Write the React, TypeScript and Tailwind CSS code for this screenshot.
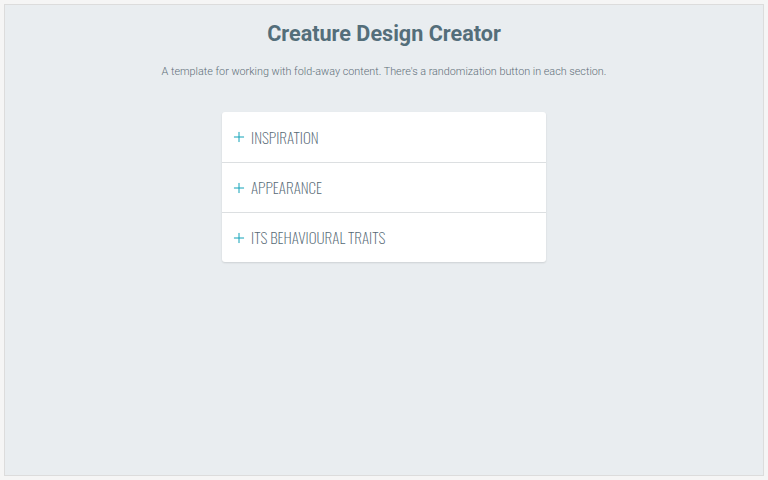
import { Plus } from 'lucide-react';

const sections = ['Inspiration', 'Appearance', 'Its Behavioural Traits'];

export default function App() {
  return (
    <div className="h-[480px] w-[768px] bg-[#f5f5f5] p-1">
      <div className="h-[472px] border border-[#dcdcdc] bg-[#e9edf0] font-['Roboto',sans-serif]">
        <h1 className="pt-[12px] text-center text-[21.6px] font-bold leading-[34px] text-[#546e7a]">Creature Design Creator</h1>
        <p className="mt-[13px] text-center text-[10.8px] font-light text-[#5f6f7a]">
          A template for working with fold-away content. There's a randomization button in each section.
        </p>
        <div className="mx-auto mt-[32px] w-[324px] rounded-[3px] bg-white shadow-[0_1px_2px_rgba(0,0,0,0.12)]">
          {sections.map((s, i) => (
            <div
              key={s}
              className={`flex h-[50px] items-center gap-[4px] px-[9px] ${i > 0 ? 'border-t border-[#dcdfe1]' : ''}`}
            >
              <Plus size={16} strokeWidth={1.5} className="text-[#11a2b8]" />
              <span className="font-['Oswald','Liberation_Sans_Narrow','DejaVu_Sans_Condensed',sans-serif] text-[15.2px] font-extralight uppercase text-[#566975]">
                {s}
              </span>
            </div>
          ))}
        </div>
      </div>
    </div>
  );
}
